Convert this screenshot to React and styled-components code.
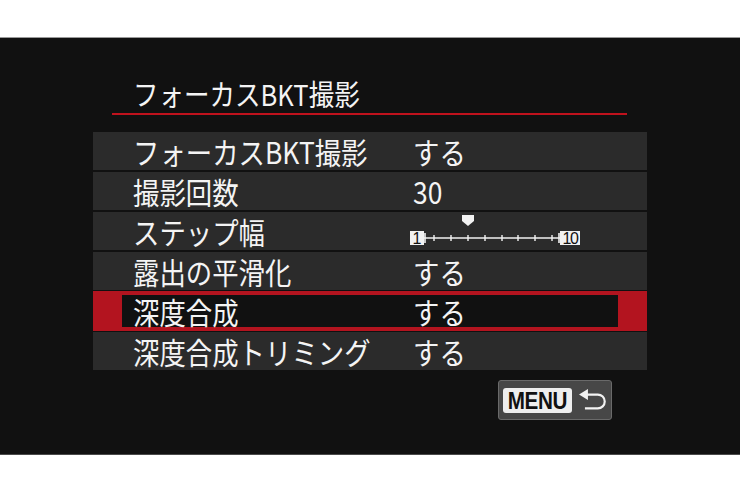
import React from 'react';
import styled, { createGlobalStyle } from 'styled-components';

const GlobalStyle = createGlobalStyle`
	html, body {
		margin: 0;
		padding: 0;
		background: #ffffff;
	}
	body {
		font-family: "Noto Sans CJK JP", "Noto Sans", sans-serif;
	}
`;

const colors = {
	screen: '#111111',
	row: '#2b2b2b',
	red: '#b3141f',
	text: '#f4f4f4'
};

const items = [
	{ label: 'フォーカスBKT撮影', value: 'する' },
	{ label: '撮影回数', value: '30' },
	{ label: 'ステップ幅', slider: 3 },
	{ label: '露出の平滑化', value: 'する' },
	{ label: '深度合成', value: 'する', selected: true },
	{ label: '深度合成トリミング', value: 'する' }
];

const Page = styled.div`
	width: 740px;
	height: 493px;
	padding-top: 37px;
	box-sizing: border-box;
`;

const Screen = styled.div`
	height: 418px;
	box-sizing: border-box;
	background: ${colors.screen};
	border-top: 1px solid #9a9a9a;
	border-bottom: 1px solid #4a4a4a;
	padding: 38px 93px 0;
	display: flex;
	flex-direction: column;
`;

// camera menu lettering is tall and narrow
const Narrow = styled.span`
	display: inline-block;
	transform: scaleX(0.88);
	transform-origin: left center;
`;

const TitleBar = styled.div`
	margin: 0 20px 0 19px;
	padding: 0 0 3px 21px;
	border-bottom: 2px solid #c0121d;
	color: ${colors.text};
	font-size: 29px;
	line-height: 34px;
	white-space: nowrap;
`;

const MenuList = styled.div`
	margin-top: 17px;
	display: flex;
	flex-direction: column;
	gap: 2px;
`;

const Row = styled.div`
	display: flex;
	height: ${p => (p.$selected ? '40px' : '38px')};
	margin: ${p => (p.$selected ? '-1px 0' : '0')};
	padding: ${p => (p.$selected ? '4px 29px' : '0')};
	box-sizing: border-box;
	background: ${p => (p.$selected ? colors.red : colors.row)};
`;

const RowInner = styled.div`
	flex: 1;
	display: grid;
	grid-template-columns: 280px 1fr;
	align-items: center;
	padding-left: ${p => (p.$selected ? '11px' : '40px')};
	background: ${p => (p.$selected ? colors.screen : 'transparent')};
	color: ${colors.text};
	font-size: 30px;
	line-height: 32px;
	white-space: nowrap;
`;

const Value = styled.span`
	display: flex;
	align-items: center;
`;

const StepScale = styled.svg`
	display: block;
	margin-left: -5px;
	overflow: visible;
`;

const Footer = styled.div`
	margin-top: 10px;
	padding-right: 35px;
	display: flex;
	justify-content: flex-end;
`;

const MenuButton = styled.div`
	display: flex;
	align-items: center;
	gap: 7px;
	height: 40px;
	width: 114px;
	box-sizing: border-box;
	padding: 0 4px;
	background: #474747;
	border: 1px solid #6a6a6a;
	border-radius: 3px;
`;

const MenuKey = styled.span`
	display: flex;
	align-items: center;
	justify-content: center;
	width: 70px;
	height: 25px;
	background: #eeeeee;
	border-radius: 3px;
	color: #111;
	font-family: "Liberation Sans", Arial, sans-serif;
	font-weight: bold;
	font-size: 24px;
	line-height: 25px;
`;

const KeyText = styled.span`
	display: inline-block;
	transform: scaleX(0.86);
	letter-spacing: -0.5px;
`;

const ticks = [26, 43, 60, 77, 94, 110, 127, 144];

const Step = ({ value }) => {
	const markerX = ticks[value - 1];
	return (
		<StepScale width="176" height="34" viewBox="0 0 176 34">
			<polygon
				points={`${markerX - 6},1 ${markerX + 6},1 ${markerX + 6},7 ${markerX},12 ${markerX - 6},7`}
				fill="#f2f2f2"
			/>
			<line x1="16" y1="24" x2="152" y2="24" stroke="#f2f2f2" strokeWidth="1.6" />
			<line x1="17" y1="19" x2="17" y2="29" stroke="#f2f2f2" strokeWidth="1.6" />
			<line x1="151" y1="19" x2="151" y2="29" stroke="#f2f2f2" strokeWidth="1.6" />
			{ticks.map(x => (
				<line key={x} x1={x} y1="21" x2={x} y2="27" stroke="#f2f2f2" strokeWidth="1.4" />
			))}
			<rect x="2" y="17" width="14" height="14" fill="#f2f2f2" />
			<text x="9" y="29.5" textAnchor="middle" fontSize="16" fill="#111"
				fontFamily="'Liberation Sans Narrow', 'Liberation Sans', Arial, sans-serif">1</text>
			<rect x="152" y="17" width="20" height="14" fill="#f2f2f2" />
			<text x="162" y="29.5" textAnchor="middle" fontSize="16" fill="#111"
				letterSpacing="-1.5" fontFamily="'Liberation Sans Narrow', 'Liberation Sans', Arial, sans-serif">10</text>
		</StepScale>
	);
};

const BackArrow = () => (
	<svg width="28" height="22" viewBox="0 0 28 22">
		<polygon points="0,5.5 9,0 9,11" fill="#f2f2f2" />
		<path d="M8 5.5 H19 A7 7 0 0 1 19 19.5 H6" fill="none" stroke="#f2f2f2" strokeWidth="2.2" />
	</svg>
);

const App = () => (
	<Page>
		<GlobalStyle />
		<Screen>
			<TitleBar><Narrow>フォーカスBKT撮影</Narrow></TitleBar>
			<MenuList>
				{items.map(item => (
					<Row key={item.label} $selected={item.selected}>
						<RowInner $selected={item.selected}>
							<span><Narrow>{item.label}</Narrow></span>
							<Value>
								{item.slider ? <Step value={item.slider} /> : <Narrow>{item.value}</Narrow>}
							</Value>
						</RowInner>
					</Row>
				))}
			</MenuList>
			<Footer>
				<MenuButton>
					<MenuKey><KeyText>MENU</KeyText></MenuKey>
					<BackArrow />
				</MenuButton>
			</Footer>
		</Screen>
	</Page>
);

export default App;
